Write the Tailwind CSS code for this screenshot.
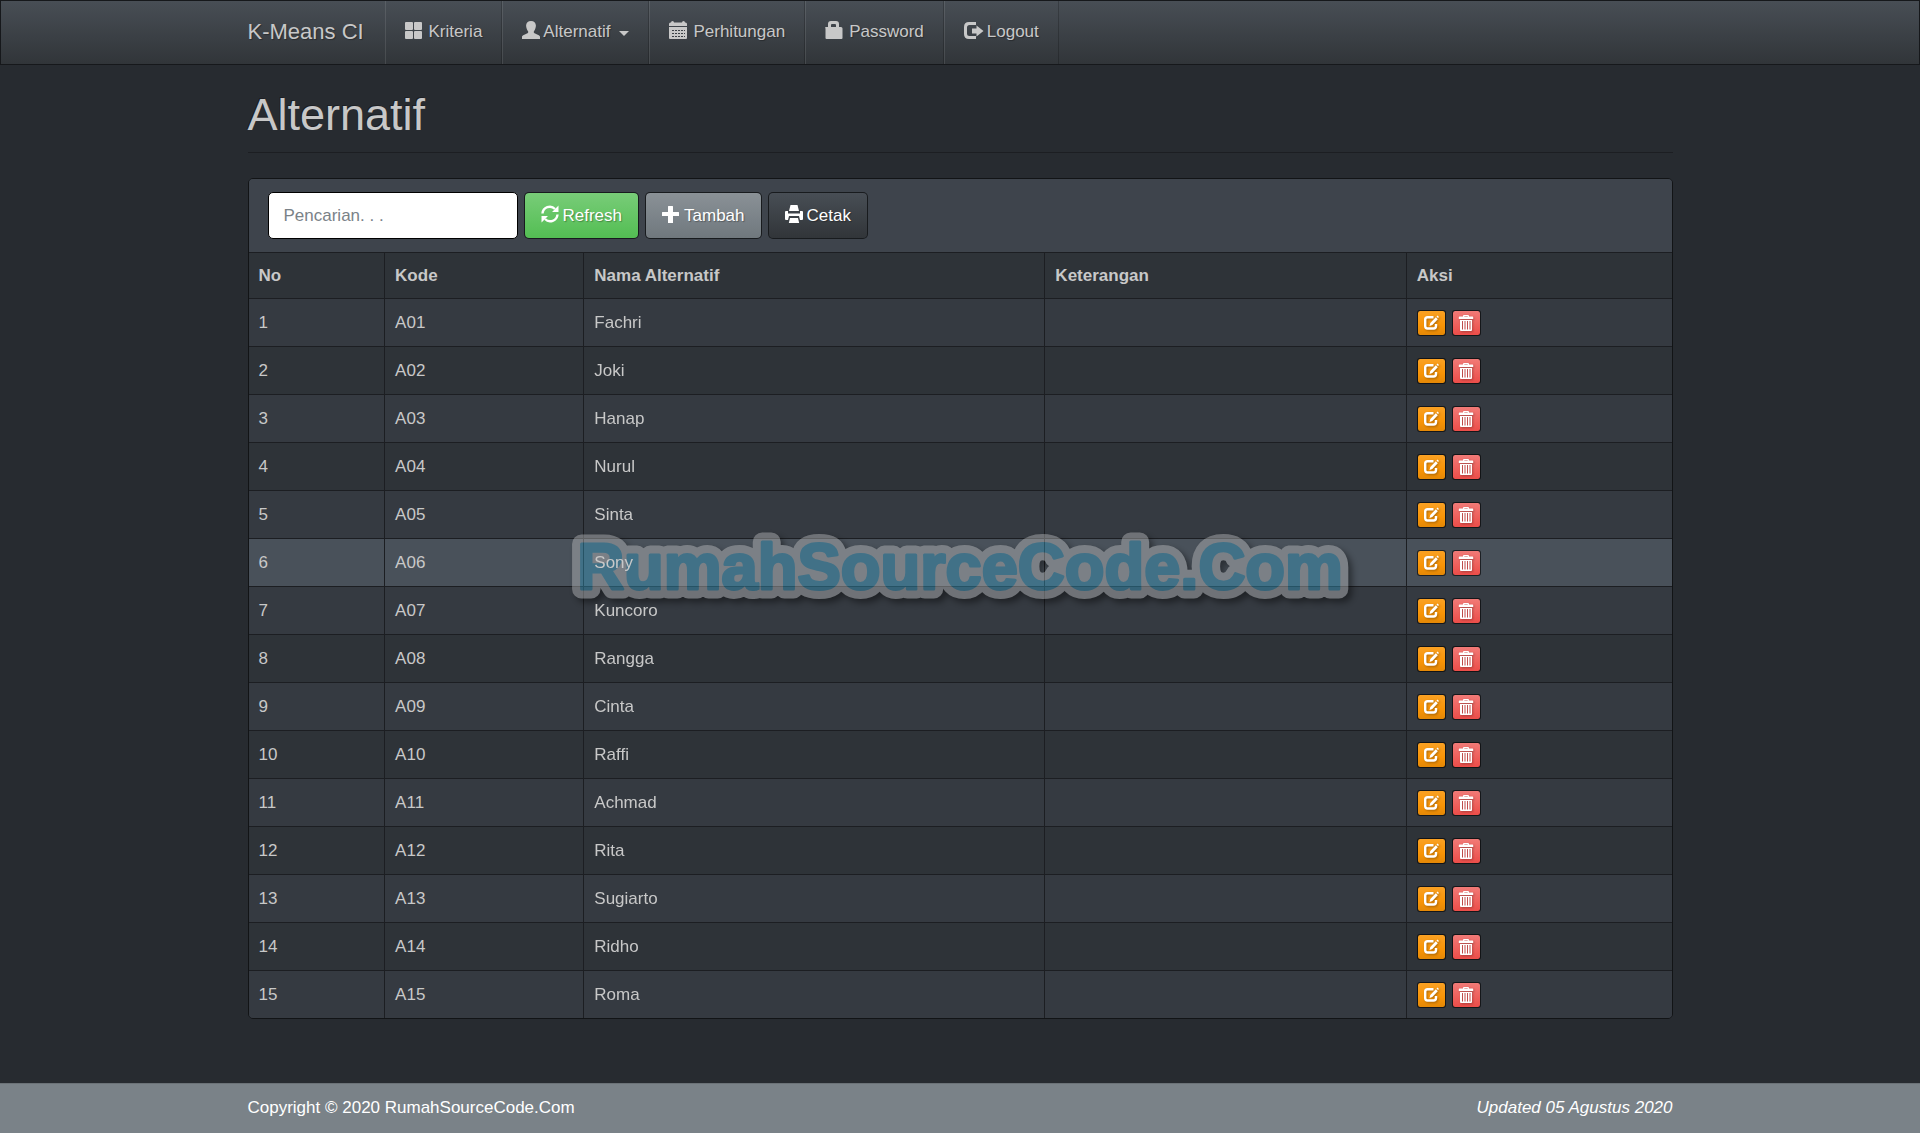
<!DOCTYPE html>
<html lang="id">
<head>
  <meta charset="UTF-8" />
  <meta name="viewport" content="width=device-width, initial-scale=1" />
  <title>Alternatif - K-Means CI</title>
  <script src="https://cdn.jsdelivr.net/npm/@tailwindcss/browser@4"></script>
</head>
<body class="min-h-screen flex flex-col bg-[#272b30] text-[#c8c8c8] text-[17px] leading-[25px] font-['Liberation_Sans',Arial,sans-serif]">

  <!-- Icons -->
  <svg class="hidden">
    <symbol id="i-grid" viewBox="0 0 18 18">
      <rect x="0" y="1" width="8" height="8" rx="1" /><rect x="9" y="1" width="8" height="8" rx="1" />
      <rect x="0" y="10" width="8" height="8" rx="1" /><rect x="9" y="10" width="8" height="8" rx="1" />
    </symbol>
    <symbol id="i-user" viewBox="0 0 18 18">
      <path d="M9 0c3 0 4.900 1.800 4.900 4.600 0 2.200-.8 4.200-1.900 5.600-.5.700-.3 1.600.5 2l4.300 2c.9.500 1.200 1 1.200 1.900V18H0v-1.900c0-.9.300-1.400 1.200-1.900l4.300-2c.8-.4 1-1.300.5-2C4.900 8.800 4.100 6.800 4.100 4.600 4.100 1.800 6 0 9 0z" />
    </symbol>
    <symbol id="i-calendar" viewBox="0 0 18 18">
      <path d="M0 5V3q0-1.500 1.500-1.500H2Q2 0 3.500 0T5 1.500h8Q13 0 14.500 0T16 1.500h.5Q18 1.500 18 3v2z" />
      <path fill-rule="evenodd" d="M0 6h18v11q0 1-1 1H1q-1 0-1-1zM3 9v1h2V9zM6 9v1h2V9zM9 9v1h2V9zM12 9v1h2V9zM15 9v1h1V9zM3 12v1h2v-1zM6 12v1h2v-1zM9 12v1h2v-1zM12 12v1h2v-1zM15 12v1h1v-1zM3 15v1h2v-1zM6 15v1h2v-1zM9 15v1h2v-1zM12 15v1h2v-1zM15 15v1h1v-1z" />
    </symbol>
    <symbol id="i-lock" viewBox="0 0 18 18">
      <path fill-rule="evenodd" d="M3 6V3q0-3 3-3h5q3 0 3 3v3h2q1.500 0 1.500 1.500V17q0 1-1 1h-15q-1 0-1-1V7.500Q-.5 6 1 6zM6 6h5V4q0-1-1-1H7Q6 3 6 4z" />
    </symbol>
    <symbol id="i-logout" viewBox="0 0 20 18">
      <path d="M12 1H5Q0 1 0 6v7q0 5 5 5h7v-3H5.500Q3 15 3 12.500v-6Q3 4 5.500 4H12z" />
      <path d="M8 7.500h4.500v-3L19.500 10l-7 5.500v-3H8z" />
    </symbol>
    <symbol id="i-refresh" viewBox="0 0 18 18">
      <path d="M1.500 8.500A7.300 7.300 0 0 1 14 4M16.500 9.500A7.300 7.300 0 0 1 4 14" fill="none" stroke="currentColor" stroke-width="2.400" />
      <path d="M17.500 .5v6.500h-6.500zM.5 17.500v-6.500h6.500z" />
    </symbol>
    <symbol id="i-plus" viewBox="0 0 18 18">
      <path d="M6.500 1h4q.5 0 .5.500V7h5.500q.5 0 .5.500v3q0 .5-.5.500H11v6.500q0 .5-.5.500h-4q-.5 0-.5-.5V11H.5q-.5 0-.5-.5v-3Q0 7 .5 7H6V1.500q0-.5.500-.5z" />
    </symbol>
    <symbol id="i-print" viewBox="0 0 18 18">
      <path d="M5.500 0h7l1.500 6H4zM1 6h2v2.500h12V6h2q1 0 1 1v7q0 1-1 1h-2l-1-4H4l-1 4H1q-1 0-1-1V7q0-1 1-1zM5 13h8l1.200 5H3.800z" />
    </symbol>
    <symbol id="i-edit" viewBox="0 0 16 16">
      <path d="M10.500 2.200H4.500Q2.200 2.200 2.200 4.500v6.500Q2.200 13.500 4.500 13.500h6q2.500 0 2.500-2.500V9" fill="none" stroke="currentColor" stroke-width="2.400" />
      <path d="M6.500 11l.8-3 5.500-5.700 2 2-5.500 5.700zM13.500 1.600l1-1 1.500 1.500-1 1z" />
    </symbol>
    <symbol id="i-trash" viewBox="0 0 16 16">
      <path fill-rule="evenodd" d="M5 1.500V1q0-1 1-1h4q1 0 1 1v.5h3.500q.7 0 .7.700V4H.8V2.200q0-.7.700-.7zM6.300 1.500h3.400v-.5H6.300zM2 5h12v10q0 1-1 1H3q-1 0-1-1zM4 6v8.500h1V6zM6.500 6v8.500h1V6zM9 6v8.500h1V6zM11.500 6v8.500h1V6z" />
    </symbol>
  </svg>

  <!-- Navbar -->
  <nav class="border border-[#16181b] bg-[linear-gradient(#484e55,#3a3f44_60%,#313539)] [text-shadow:1px_1px_1px_rgba(0,0,0,0.3)]">
    <div class="max-w-[1425px] mx-auto flex h-[63px]">
      <a href="#" class="flex items-center text-[22px] w-[137px] pb-[2px] whitespace-nowrap">K-Means CI</a>
      <ul class="flex">
        <li class="flex border-l border-l-white/10 border-r border-r-black/20">
          <a href="#" class="flex items-center gap-[6px] px-[19px] pb-[2px]"><svg class="size-[18px] -mt-1 fill-current"><use href="#i-grid" /></svg>Kriteria</a>
        </li>
        <li class="flex border-l border-l-white/10 border-r border-r-black/20">
          <a href="#" class="flex items-center gap-[3px] px-[19px] pb-[2px]"><svg class="size-[18px] -mt-1 fill-current"><use href="#i-user" /></svg>Alternatif
            <span class="ml-[6px] mt-1 border-x-5 border-x-transparent border-t-5 border-t-[#c8c8c8]"></span></a>
        </li>
        <li class="flex border-l border-l-white/10 border-r border-r-black/20">
          <a href="#" class="flex items-center gap-[6px] px-[19px] pb-[2px]"><svg class="size-[18px] -mt-1 fill-current"><use href="#i-calendar" /></svg>Perhitungan</a>
        </li>
        <li class="flex border-l border-l-white/10 border-r border-r-black/20">
          <a href="#" class="flex items-center gap-[6px] px-[19px] pb-[2px]"><svg class="size-[18px] -mt-1 fill-current"><use href="#i-lock" /></svg>Password</a>
        </li>
        <li class="flex border-l border-l-white/10 border-r border-r-black/20">
          <a href="#" class="flex items-center gap-[3px] px-[19px] pb-[2px]"><svg class="w-5 h-[18px] -mt-1 fill-current"><use href="#i-logout" /></svg>Logout</a>
        </li>
      </ul>
    </div>
  </nav>

  <main class="w-full max-w-[1425px] mx-auto">
    <header class="mt-[25px] mb-[25px] pb-3 border-b border-[#1c1e22]">
      <h1 class="text-[45px] leading-[50px] [text-shadow:-1px_-1px_0_rgba(0,0,0,0.3)]">Alternatif</h1>
    </header>

    <!-- Data panel -->
    <section class="mb-16 rounded-[5px] border border-[#121416] bg-[#2e3338] overflow-hidden">
      <form class="flex gap-[6px] px-[19px] py-[13px] bg-[#3e444c]">
        <input type="text" aria-label="Pencarian" placeholder="Pencarian. . ." class="w-[250px] h-[47px] px-[15px] rounded-[5px] border border-black bg-white text-[#272b30] placeholder:text-[#7a8288]" />
        <button type="button" class="flex items-center gap-1 h-[47px] px-4 rounded-[5px] border border-black/60 bg-clip-padding bg-[linear-gradient(#78cc78,#62c462_60%,#53be53)] text-white [text-shadow:1px_1px_1px_rgba(0,0,0,0.3)]"><svg class="size-[18px] -mt-1 fill-current"><use href="#i-refresh" /></svg>Refresh</button>
        <button type="button" class="flex items-center gap-1 h-[47px] px-4 rounded-[5px] border border-black/60 bg-clip-padding bg-[linear-gradient(#8a9196,#7a8288_60%,#70787d)] text-white [text-shadow:1px_1px_1px_rgba(0,0,0,0.3)]"><svg class="size-[18px] -mt-1 fill-current"><use href="#i-plus" /></svg>Tambah</button>
        <button type="button" class="flex items-center gap-1 h-[47px] px-4 rounded-[5px] border border-black/60 bg-clip-padding bg-[linear-gradient(#484e55,#3a3f44_60%,#313539)] text-white [text-shadow:1px_1px_1px_rgba(0,0,0,0.3)]"><svg class="size-[18px] -mt-1 fill-current"><use href="#i-print" /></svg>Cetak</button>
      </form>
      <table class="w-full table-fixed border-separate border-spacing-0 text-left">
        <thead>
          <tr class="*:h-[46px] *:px-[10px] *:border-t *:border-r *:border-[#1c1e22] *:last:border-r-0">
            <th class="w-[9.6%]">No</th>
            <th class="w-[14%]">Kode</th>
            <th class="w-[32.4%]">Nama Alternatif</th>
            <th class="w-[25.4%]">Keterangan</th>
            <th>Aksi</th>
          </tr>
        </thead>
        <tbody id="rows"></tbody>
      </table>
    </section>
  </main>

  <footer class="mt-auto h-[50px] bg-[#7a8288] border-t border-[#6b7277] text-white">
    <div class="max-w-[1425px] mx-auto h-[46px] flex items-center justify-between">
      <p>Copyright © 2020 RumahSourceCode.Com</p>
      <p><em>Updated 05 Agustus 2020</em></p>
    </div>
  </footer>

  <!-- Watermark -->
  <div class="fixed inset-0 flex items-center justify-center pointer-events-none opacity-40">
    <svg viewBox="0 0 800 80" class="w-[800px] h-20 overflow-visible drop-shadow-[4px_4px_3px_#000]" stroke-linejoin="round" stroke-linecap="round">
      <defs>
        <text id="wm" x="400" y="62" text-anchor="middle" font-size="65" font-weight="700">RumahSourceCode.Com</text>
      </defs>
      <use href="#wm" fill="#c8c8c8" stroke="#c8c8c8" stroke-width="19" />
      <use href="#wm" fill="#38a3cb" stroke="#38a3cb" stroke-width="3" />
    </svg>
  </div>

  <script>
    const names = ['Fachri', 'Joki', 'Hanap', 'Nurul', 'Sinta', 'Sony', 'Kuncoro', 'Rangga', 'Cinta', 'Raffi', 'Achmad', 'Rita', 'Sugiarto', 'Ridho', 'Roma'];
    const active = 6;

    document.getElementById('rows').innerHTML = names.map((name, i) => {
      const no = i + 1;
      const bg = no === active ? 'bg-[#49515a]' : 'odd:bg-[#353a41]';
      return `
        <tr class="${bg} *:h-12 *:px-[10px] *:border-t *:border-r *:border-[#1c1e22] *:last:border-r-0">
          <td>${no}</td>
          <td>A${String(no).padStart(2, '0')}</td>
          <td><span class="relative z-10">${name}</span></td>
          <td></td>
          <td>
            <div class="flex gap-[6px]">
              <a href="#" aria-label="Ubah ${name}" class="flex items-center justify-center w-[29px] h-[26px] rounded-[3px] border border-black/60 bg-clip-padding bg-[linear-gradient(#faa123,#f89406_60%,#e48806)] text-white"><svg class="size-4 fill-current drop-shadow-[1px_1px_1px_rgba(0,0,0,0.3)]"><use href="#i-edit" /></svg></a>
              <a href="#" aria-label="Hapus ${name}" class="flex items-center justify-center w-[29px] h-[26px] rounded-[3px] border border-black/60 bg-clip-padding bg-[linear-gradient(#f17a77,#ee5f5b_60%,#ec4d49)] text-white"><svg class="size-4 fill-current drop-shadow-[1px_1px_1px_rgba(0,0,0,0.3)]"><use href="#i-trash" /></svg></a>
            </div>
          </td>
        </tr>`;
    }).join('');
  </script>
</body>
</html>
